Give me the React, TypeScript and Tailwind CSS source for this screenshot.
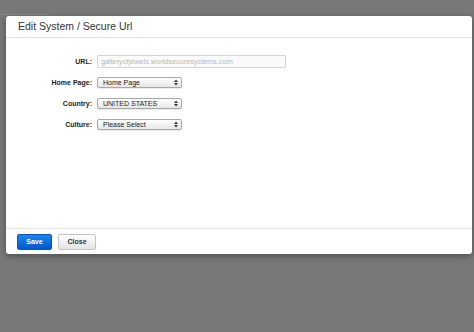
import React from "react";

function SelectBox({ value }: { value: string }) {
  return (
    <div className="flex items-center justify-between w-[85px] h-[11px] rounded-[2px] border border-[#a8a8a8] bg-gradient-to-b from-white to-[#e6e6e6] pl-[5px] pr-[3px] shadow-[0_1px_0_rgba(0,0,0,0.08)]">
      <span className="text-[7px] leading-none text-[#222]">{value}</span>
      <svg width="4" height="7" viewBox="0 0 4 7">
        <path d="M0 3 L2 0.5 L4 3 Z" fill="#333" />
        <path d="M0 4 L2 6.5 L4 4 Z" fill="#333" />
      </svg>
    </div>
  );
}

export default function App() {
  const rows: { label: string; el: React.ReactNode }[] = [
    {
      label: "URL:",
      el: (
        <div className="w-[189px] h-[13px] border border-[#d4d4d4] bg-[#fafafa] rounded-[1px] flex items-center pl-[3px]">
          <span className="text-[7.3px] leading-none text-[#b8b8b8]">galleryofjewels.worldsecuresystems.com</span>
        </div>
      ),
    },
    { label: "Home Page:", el: <SelectBox value="Home Page" /> },
    { label: "Country:", el: <SelectBox value="UNITED STATES" /> },
    { label: "Culture:", el: <SelectBox value="Please Select" /> },
  ];
  return (
    <div
      className="relative w-[474px] h-[332px] overflow-hidden bg-[#787878]"
      style={{ fontFamily: '"Liberation Sans", Arial, sans-serif' }}
    >
      <div className="h-[15px] w-[50px] border-b border-[#8a8a8a]" />
      <div className="absolute left-[6px] top-[16px] w-[466px] h-[238px] bg-white rounded-[3px] shadow-[0_2px_6px_rgba(0,0,0,0.35)] flex flex-col">
        <div className="h-[22px] border-b border-[#e3e3e3] flex items-center px-[12px]">
          <span className="text-[10.5px] text-[#333] leading-none">Edit System / Secure Url</span>
        </div>
        <div className="flex-1 pt-[17px]">
          <div className="flex flex-col gap-[8px]">
            {rows.map((r, i) => (
              <div key={i} className="flex items-center h-[13px]">
                <div className="w-[86px] text-right text-[7px] font-bold text-[#222] leading-none">{r.label}</div>
                <div className="ml-[5px]">{r.el}</div>
              </div>
            ))}
          </div>
        </div>
        <div className="h-[26px] border-t border-[#e3e3e3] flex items-center gap-[6px] px-[11px]">
          <div className="w-[35px] h-[16px] rounded-[2px] bg-gradient-to-b from-[#1a86ef] to-[#0657c9] border border-[#0a58b8] flex items-center justify-center">
            <span className="text-[7px] font-bold text-white leading-none">Save</span>
          </div>
          <div className="w-[38px] h-[16px] rounded-[2px] bg-gradient-to-b from-white to-[#e4e4e4] border border-[#c4c4c4] flex items-center justify-center">
            <span className="text-[7px] font-bold text-[#333] leading-none">Close</span>
          </div>
        </div>
      </div>
    </div>
  );
}
